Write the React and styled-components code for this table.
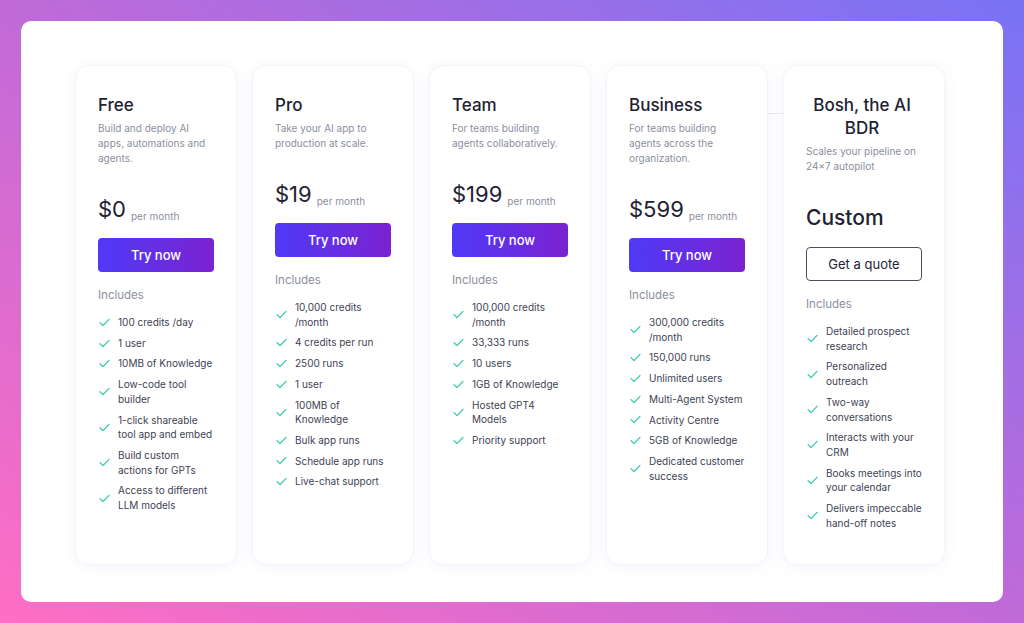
import React from "react";
import styled, { createGlobalStyle } from "styled-components";

const plans = [
  {
    name: "Free",
    desc: "Build and deploy AI apps, automations and agents.",
    price: "$0",
    features: [
      "100 credits /day",
      "1 user",
      "10MB of Knowledge",
      "Low-code tool builder",
      "1-click shareable tool app and embed",
      "Build custom actions for GPTs",
      "Access to different LLM models",
    ],
  },
  {
    name: "Pro",
    desc: "Take your AI app to production at scale.",
    price: "$19",
    features: [
      "10,000 credits /month",
      "4 credits per run",
      "2500 runs",
      "1 user",
      "100MB of Knowledge",
      "Bulk app runs",
      "Schedule app runs",
      "Live-chat support",
    ],
  },
  {
    name: "Team",
    desc: "For teams building agents collaboratively.",
    price: "$199",
    features: [
      "100,000 credits /month",
      "33,333 runs",
      "10 users",
      "1GB of Knowledge",
      "Hosted GPT4 Models",
      "Priority support",
    ],
  },
  {
    name: "Business",
    desc: "For teams building agents across the organization.",
    price: "$599",
    features: [
      "300,000 credits /month",
      "150,000 runs",
      "Unlimited users",
      "Multi-Agent System",
      "Activity Centre",
      "5GB of Knowledge",
      "Dedicated customer success",
    ],
  },
  {
    name: "Bosh, the AI BDR",
    desc: "Scales your pipeline on 24×7 autopilot",
    custom: true,
    features: [
      "Detailed prospect research",
      "Personalized outreach",
      "Two-way conversations",
      "Interacts with your CRM",
      "Books meetings into your calendar",
      "Delivers impeccable hand-off notes",
    ],
  },
];

function Check() {
  return (
    <svg width="11" height="9" viewBox="0 0 11 9" fill="none">
      <path
        d="M1 4.6L4 7.6L10 1.4"
        stroke="#35c7ab"
        strokeWidth="1.3"
        strokeLinecap="round"
        strokeLinejoin="round"
      />
    </svg>
  );
}

export default function App() {
  return (
    <>
      <GlobalStyle />
      <Page>
        <Panel>
          <Grid>
            {plans.map((plan) => (
              <Card key={plan.name} $custom={plan.custom}>
                <Title $center={plan.custom}>{plan.name}</Title>
                <Desc>{plan.desc}</Desc>
                {plan.custom ? (
                  <Custom>Custom</Custom>
                ) : (
                  <PriceRow>
                    <Price>{plan.price}</Price>
                    <Per>per month</Per>
                  </PriceRow>
                )}
                {plan.custom ? (
                  <OutlineButton>Get a quote</OutlineButton>
                ) : (
                  <Button>Try now</Button>
                )}
                <Includes>Includes</Includes>
                <List>
                  {plan.features.map((f) => (
                    <Item key={f}>
                      <IconBox>
                        <Check />
                      </IconBox>
                      <span>{f}</span>
                    </Item>
                  ))}
                </List>
              </Card>
            ))}
          </Grid>
        </Panel>
      </Page>
    </>
  );
}

const GlobalStyle = createGlobalStyle`
  * { box-sizing: border-box; }
  body {
    margin: 0;
    font-family: Inter, "Noto Sans", sans-serif;
  }
`;

const Page = styled.div`
  width: 1024px;
  height: 623px;
  padding: 21px;
  background: linear-gradient(to top right, #ff6ec4 0%, #c06ad8 50%, #7873f5 100%);
`;

const Panel = styled.div`
  width: 982px;
  height: 581px;
  background: #fff;
  border-radius: 10px;
  padding: 44px 0 37px 54px;
  display: flex;
`;

const Grid = styled.div`
  display: grid;
  grid-template-columns: repeat(5, 162px);
  gap: 15px;
`;

const Card = styled.div`
  position: relative;
  background: #fff;
  border-radius: 14px;
  border: 1px solid #f4f4fa;
  box-shadow: 0 2px 14px rgba(110, 100, 200, 0.08);
  padding: 28px 22px 20px 22px;
  display: flex;
  flex-direction: column;
  align-items: flex-start;

  ${({ $custom }) =>
    $custom &&
    `
    &::before {
      content: "";
      position: absolute;
      left: -16px;
      top: 47px;
      width: 15px;
      height: 1px;
      background: #e4e4f2;
    }
  `}
`;

const Title = styled.div`
  font-size: 17px;
  font-weight: 500;
  line-height: 23px;
  color: #1e2232;
  align-self: ${({ $center }) => ($center ? "stretch" : "auto")};
  text-align: ${({ $center }) => ($center ? "center" : "left")};
  padding-right: ${({ $center }) => ($center ? "4px" : "0")};
`;

const Desc = styled.div`
  margin-top: 4px;
  font-size: 10px;
  line-height: 15px;
  color: #8a8f9e;
`;

const PriceRow = styled.div`
  margin-top: 29px;
  display: flex;
  align-items: flex-end;
  gap: 5px;
`;

const Price = styled.div`
  font-size: 22px;
  line-height: 28px;
  color: #1e2232;
`;

const Per = styled.div`
  font-size: 10px;
  line-height: 12px;
  color: #8a8f9e;
  margin-bottom: 1px;
`;

const Custom = styled.div`
  margin-top: 30px;
  font-size: 21px;
  font-weight: 500;
  line-height: 28px;
  color: #1e2232;
`;

const Button = styled.div`
  margin-top: 15px;
  width: 116px;
  height: 34px;
  border-radius: 4px;
  background: linear-gradient(90deg, #4f3af6 0%, #7b22d0 100%);
  color: #fff;
  font-size: 13px;
  font-weight: 500;
  display: flex;
  align-items: center;
  justify-content: center;
`;

const OutlineButton = styled(Button)`
  background: #fff;
  color: #1e2232;
  font-weight: 400;
  border: 1px solid #4a4f63;
`;

const Includes = styled.div`
  margin-top: 16px;
  font-size: 11.5px;
  line-height: 15px;
  color: #8a8f9e;
`;

const List = styled.div`
  margin-top: 12px;
  display: flex;
  flex-direction: column;
  gap: 6px;
`;

const Item = styled.div`
  display: flex;
  align-items: center;
  gap: 8px;
  font-size: 10px;
  line-height: 14.7px;
  color: #3d4254;
`;

const IconBox = styled.div`
  flex: 0 0 12px;
  display: flex;
  align-items: center;
  justify-content: center;
`;
